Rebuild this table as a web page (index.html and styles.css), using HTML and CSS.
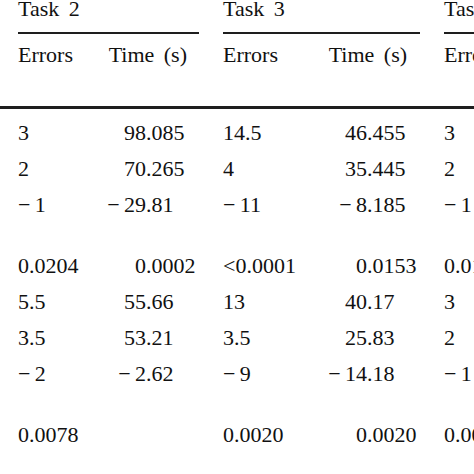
FILE: index.html
```html
<!DOCTYPE html>
<html lang="en">
<head>
    <meta charset="UTF-8">
    <meta name="viewport" content="width=device-width, initial-scale=1.0">
    <title>Errors and completion time per task</title>
    <link rel="stylesheet" href="styles.css">
</head>
<body>

    <table class="results">
        <colgroup>
            <col class="c1">
            <col class="c2">
            <col class="c3">
            <col class="c4">
            <col class="c5">
        </colgroup>
        <thead>
            <tr class="tasks">
                <th colspan="2" class="g1"><div class="group">Task 2</div></th>
                <th colspan="2" class="g2"><div class="group">Task 3</div></th>
                <th class="g3"><div class="group">Task 4</div></th>
            </tr>
            <tr class="labels">
                <th class="err first">Errors</th>
                <th class="time">Time (s)</th>
                <th class="err">Errors</th>
                <th class="time">Time (s)</th>
                <th class="err">Errors</th>
            </tr>
        </thead>
        <tbody>
            <tr class="top">
                <td class="err first">3</td>
                <td class="time"><span class="int">98</span><span class="frac">.085</span></td>
                <td class="err">14.5</td>
                <td class="time"><span class="int">46</span><span class="frac">.455</span></td>
                <td class="err">3</td>
            </tr>
            <tr>
                <td class="err first">2</td>
                <td class="time"><span class="int">70</span><span class="frac">.265</span></td>
                <td class="err">4</td>
                <td class="time"><span class="int">35</span><span class="frac">.445</span></td>
                <td class="err">2</td>
            </tr>
            <tr>
                <td class="err first">−&thinsp;1</td>
                <td class="time"><span class="int">−&thinsp;29</span><span class="frac">.81</span></td>
                <td class="err">−&thinsp;11</td>
                <td class="time"><span class="int">−&thinsp;8</span><span class="frac">.185</span></td>
                <td class="err">−&thinsp;1</td>
            </tr>
            <tr class="sep">
                <td class="err first">0.0204</td>
                <td class="time"><span class="int">0</span><span class="frac">.0002</span></td>
                <td class="err">&lt;0.0001</td>
                <td class="time"><span class="int">0</span><span class="frac">.0153</span></td>
                <td class="err">0.0156</td>
            </tr>
            <tr>
                <td class="err first">5.5</td>
                <td class="time"><span class="int">55</span><span class="frac">.66</span></td>
                <td class="err">13</td>
                <td class="time"><span class="int">40</span><span class="frac">.17</span></td>
                <td class="err">3</td>
            </tr>
            <tr>
                <td class="err first">3.5</td>
                <td class="time"><span class="int">53</span><span class="frac">.21</span></td>
                <td class="err">3.5</td>
                <td class="time"><span class="int">25</span><span class="frac">.83</span></td>
                <td class="err">2</td>
            </tr>
            <tr>
                <td class="err first">−&thinsp;2</td>
                <td class="time"><span class="int">−&thinsp;2</span><span class="frac">.62</span></td>
                <td class="err">−&thinsp;9</td>
                <td class="time"><span class="int">−&thinsp;14</span><span class="frac">.18</span></td>
                <td class="err">−&thinsp;1</td>
            </tr>
            <tr class="sep">
                <td class="err first">0.0078</td>
                <td class="time"></td>
                <td class="err">0.0020</td>
                <td class="time"><span class="int">0</span><span class="frac">.0020</span></td>
                <td class="err">0.0039</td>
            </tr>
        </tbody>
    </table>

</body>
</html>
```

FILE: styles.css
```css
html, body {
    margin: 0;
    overflow: hidden;
    background-color: #ffffff;
}
body {
    font-family: 'Liberation Serif', 'Times New Roman', serif;
    font-size: 22px;
    color: #111;
}
.results {
    table-layout: fixed;
    width: 600px;
    border-collapse: separate;
    border-spacing: 0;
}
.c1 { width: 106px; }
.c2 { width: 105px; }
.c3 { width: 109px; }
.c4 { width: 112px; }
.c5 { width: 168px; }

th, td {
    padding: 0;
    font-weight: normal;
    white-space: nowrap;
}
th {
    word-spacing: 4px;
}

/* task headings with their own rule */
.tasks th {
    text-align: left;
    line-height: 17px;
}
.tasks .g1 { padding: 0 12px 0 18px; }
.tasks .g2 { padding: 0 12px; }
.tasks .g3 { padding: 0 0 0 12px; }
.group {
    padding-bottom: 15px;
    border-bottom: 2px solid #1e1e1e;
}

/* column labels, thick rule below */
.labels th {
    line-height: 22px;
    padding-top: 10px;
    padding-bottom: 40px;
    border-bottom: 3px solid #1e1e1e;
}
.labels .err { text-align: left; padding-left: 12px; }
.labels .err.first { padding-left: 18px; }
.labels .time { text-align: right; padding-right: 24px; }
.labels .time:nth-child(4) { padding-right: 25px; }

/* data */
td {
    line-height: 36px;
}
td.err { padding-left: 12px; }
td.err.first { padding-left: 18px; }
td.time {
    text-align: right;
    padding-right: 12px;
}
.frac {
    display: inline-block;
    width: 53px;
    text-align: left;
}
tr.top td { padding-top: 6px; }
tr.sep td { padding-top: 25px; }
```
